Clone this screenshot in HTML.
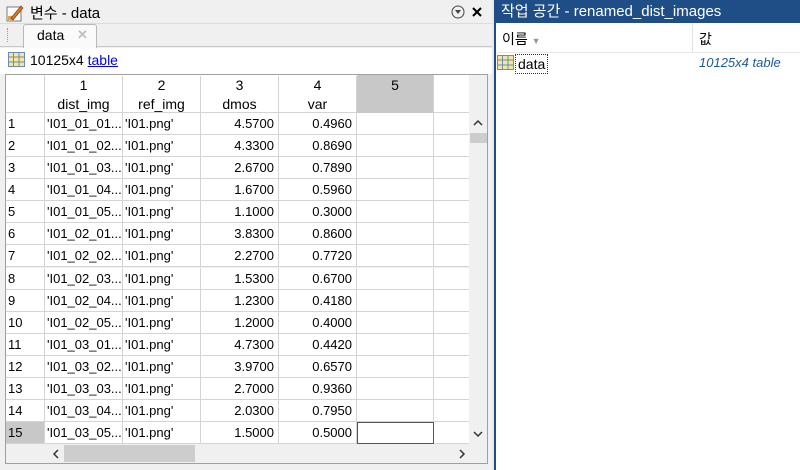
<!DOCTYPE html>
<html><head><meta charset="utf-8"><style>
*{box-sizing:border-box;margin:0;padding:0}
body{width:800px;height:470px;overflow:hidden;background:#f0f0f0;font-family:"Liberation Sans","Noto Sans CJK KR",sans-serif;font-size:13px;color:#000;position:relative}
.a{position:absolute}
.cell{position:absolute;height:22px;line-height:21px;border-right:1px solid #d4d4d4;border-bottom:1px solid #d4d4d4;background:#fff;white-space:nowrap;overflow:hidden;font-size:13px}
.r{text-align:right;padding-right:4px}
.l{padding-left:2px}
</style></head><body>
<div class="a" style="left:0;top:0;width:492px;height:24px;background:#f0f0f0;border-bottom:1px solid #dcdcdc"></div>
<svg class="a" style="left:6px;top:4px" width="18" height="18"><rect x="1" y="3" width="14" height="14" fill="#fff" stroke="#7a7a7a"/><rect x="2" y="12" width="6" height="4" fill="#e8a03c"/><path d="M5 14 L15 2 L17 4 L7 16 Z" fill="#d97a2a" stroke="#803000" stroke-width=".6"/></svg>
<div class="a" style="left:30px;top:2px;font-size:15px">변수 - data</div>
<svg class="a" style="left:451px;top:5px" width="14" height="14"><circle cx="7" cy="7" r="6" fill="none" stroke="#444"/><path d="M4 5 L10 5 L7 9 Z" fill="#444"/></svg>
<svg class="a" style="left:472px;top:7px" width="10" height="10"><path d="M1 1L9 9M9 1L1 9" stroke="#000" stroke-width="2"/></svg>
<div class="a" style="left:0;top:24px;width:492px;height:23px;background:#f0f0f0;border-bottom:1px solid #c8c8c8"></div>
<div class="a" style="left:7px;top:28px;width:2px;height:14px;border-left:1px dotted #999"></div>
<div class="a" style="left:23px;top:24px;width:74px;height:24px;background:#fafafa;border:1px solid #b8b8b8;border-bottom:none;border-radius:3px 3px 0 0"></div>
<div class="a" style="left:37px;top:27px;font-size:14px">data</div>
<div class="a" style="left:77px;top:27px;font-size:13px;color:#c0c0c0;font-weight:bold">✕</div>
<div class="a" style="left:0;top:48px;width:492px;height:26px;background:#fff"></div>
<svg class="a" style="left:8px;top:52px" width="17" height="15"><rect x="0.5" y="0.5" width="16" height="14" fill="#f6e79a" stroke="#6a8cb8"/><path d="M0 5H17M0 10H17M5.5 0V15M11 0V15" stroke="#6a8cb8"/></svg>
<div class="a" style="left:30px;top:52px;font-size:14px">10125x4 <span style="color:#0000ee;text-decoration:underline">table</span></div>
<div class="a" style="left:5px;top:74px;width:483px;height:390px;border:1px solid #a0a0a0;background:#f0f0f0"></div>
<div class="a" style="left:6px;top:75px;width:463px;height:38px;background:#fff"></div>
<div class="a" style="left:6px;top:75px;width:39px;height:38px;border-right:1px solid #d4d4d4;border-bottom:1px solid #d4d4d4"></div>
<div class="a" style="left:45px;top:76px;width:78px;height:37px;border-right:1px solid #d4d4d4;border-bottom:1px solid #d4d4d4;text-align:center;line-height:19px;font-size:14px">1<br>dist_img</div>
<div class="a" style="left:123px;top:76px;width:78px;height:37px;border-right:1px solid #d4d4d4;border-bottom:1px solid #d4d4d4;text-align:center;line-height:19px;font-size:14px">2<br>ref_img</div>
<div class="a" style="left:201px;top:76px;width:78px;height:37px;border-right:1px solid #d4d4d4;border-bottom:1px solid #d4d4d4;text-align:center;line-height:19px;font-size:14px">3<br>dmos</div>
<div class="a" style="left:279px;top:76px;width:78px;height:37px;border-right:1px solid #d4d4d4;border-bottom:1px solid #d4d4d4;text-align:center;line-height:19px;font-size:14px">4<br>var</div>
<div class="a" style="left:357px;top:75px;width:77px;height:38px;background:#c8c8c8;border-right:1px solid #d4d4d4;text-align:center;line-height:19px;font-size:14px;padding-top:1px">5</div>
<div class="a" style="left:434px;top:75px;width:35px;height:38px;border-bottom:1px solid #d4d4d4"></div>
<div id="rows"></div>
<div class="a" style="left:469px;top:113px;width:18px;height:331px;background:#f0f0f0"></div>
<svg class="a" style="left:473px;top:119px" width="10" height="7"><path d="M1 6L5 2L9 6" fill="none" stroke="#333" stroke-width="1.5"/></svg>
<div class="a" style="left:470px;top:133px;width:17px;height:10px;background:#cdcdcd"></div>
<svg class="a" style="left:473px;top:431px" width="10" height="7"><path d="M1 1L5 5L9 1" fill="none" stroke="#333" stroke-width="1.5"/></svg>
<div class="a" style="left:6px;top:444px;width:463px;height:19px;background:#f0f0f0"></div>
<svg class="a" style="left:52px;top:449px" width="7" height="10"><path d="M6 1L2 5L6 9" fill="none" stroke="#333" stroke-width="1.5"/></svg>
<div class="a" style="left:64px;top:445px;width:131px;height:17px;background:#cdcdcd"></div>
<svg class="a" style="left:459px;top:449px" width="7" height="10"><path d="M1 1L5 5L1 9" fill="none" stroke="#333" stroke-width="1.5"/></svg>
<div class="a" style="left:492px;top:0;width:4px;height:470px;background:#e8e8e8;border-right:2px solid #1f4e86"></div>
<div class="a" style="left:496px;top:0;width:304px;height:470px;background:#fff"></div>
<div class="a" style="left:496px;top:0;width:304px;height:23px;background:#1f4e86;color:#fff;font-size:15px;line-height:23px;padding-left:5px">작업 공간 - renamed_dist_images</div>
<div class="a" style="left:496px;top:23px;width:304px;height:30px;border-bottom:1px solid #e8e8e8"></div>
<div class="a" style="left:692px;top:23px;width:1px;height:30px;background:#e2e2e2"></div>
<div class="a" style="left:502px;top:29px;font-size:14px">이름 <span style="color:#999;font-size:9px">▼</span></div>
<div class="a" style="left:699px;top:29px;font-size:14px">값</div>
<svg class="a" style="left:497px;top:55px" width="17" height="15"><rect x="0.5" y="0.5" width="16" height="14" fill="#f6e79a" stroke="#6a8cb8"/><path d="M0 5H17M0 10H17M5.5 0V15M11 0V15" stroke="#6a8cb8"/></svg>
<div class="a" style="left:515px;top:54px;height:20px;padding:0 2px;border:1px dotted #333;font-size:14px;line-height:18px">data</div>
<div class="a" style="left:699px;top:55px;font-size:13px;font-style:italic;color:#1a5aa0">10125x4 table</div>
<script>
var d=[["'I01_01_01....","4.5700","0.4960"],["'I01_01_02....","4.3300","0.8690"],["'I01_01_03....","2.6700","0.7890"],["'I01_01_04....","1.6700","0.5960"],["'I01_01_05....","1.1000","0.3000"],["'I01_02_01....","3.8300","0.8600"],["'I01_02_02....","2.2700","0.7720"],["'I01_02_03....","1.5300","0.6700"],["'I01_02_04....","1.2300","0.4180"],["'I01_02_05....","1.2000","0.4000"],["'I01_03_01....","4.7300","0.4420"],["'I01_03_02....","3.9700","0.6570"],["'I01_03_03....","2.7000","0.9360"],["'I01_03_04....","2.0300","0.7950"],["'I01_03_05....","1.5000","0.5000"]];
var h="";
for(var i=0;i<15;i++){var y=113+i*22.07;var t="top:"+y.toFixed(1)+"px;";var last=i==14;
h+='<div class="cell l" style="left:6px;width:39px;'+t+(last?'background:#c8c8c8;':'')+'">'+(i+1)+'</div>';
h+='<div class="cell l" style="left:45px;width:78px;'+t+'">'+d[i][0]+'</div>';
h+='<div class="cell l" style="left:123px;width:78px;'+t+'">\'I01.png\'</div>';
h+='<div class="cell r" style="left:201px;width:78px;'+t+'">'+d[i][1]+'</div>';
h+='<div class="cell r" style="left:279px;width:78px;'+t+'">'+d[i][2]+'</div>';
h+='<div class="cell" style="left:357px;width:77px;'+t+(last?'border:1px solid #555;':'')+'"></div>';
h+='<div class="cell" style="left:434px;width:35px;'+t+'border-right:none"></div>';}
document.getElementById("rows").outerHTML=h;
</script>
</body></html>
